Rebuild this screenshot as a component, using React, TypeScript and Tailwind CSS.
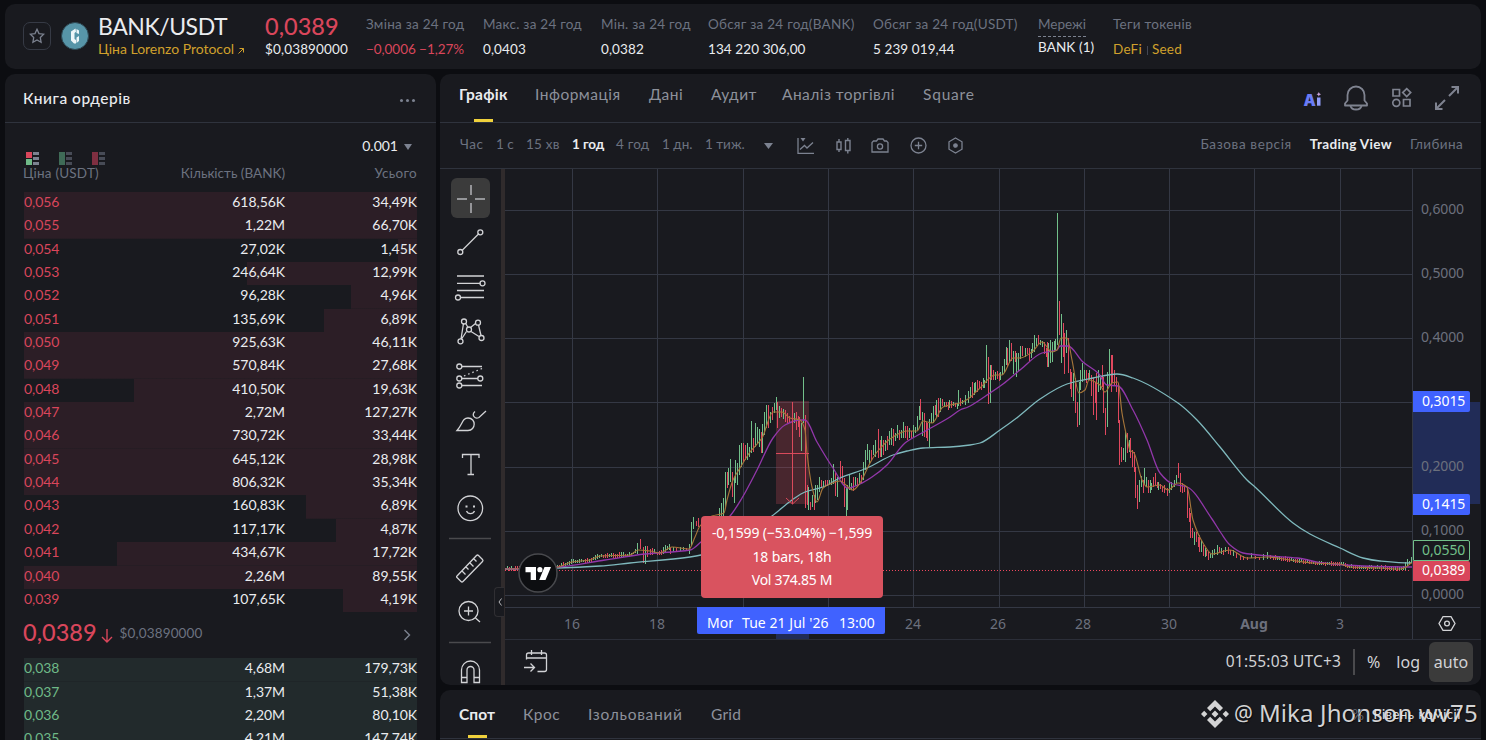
import React from 'react';

const UI = "font-['Lato','Noto_Sans',sans-serif]";
const CHART = "font-['Noto_Sans','Open_Sans',sans-serif]";

const asks: [string, string, string, number][] = [
  ['0,056', '618,56K', '34,49K', 393],
  ['0,055', '1,22M', '66,70K', 393],
  ['0,054', '27,02K', '1,45K', 19],
  ['0,053', '246,64K', '12,99K', 170],
  ['0,052', '96,28K', '4,96K', 66],
  ['0,051', '135,69K', '6,89K', 93],
  ['0,050', '925,63K', '46,11K', 393],
  ['0,049', '570,84K', '27,68K', 393],
  ['0,048', '410,50K', '19,63K', 283],
  ['0,047', '2,72M', '127,27K', 393],
  ['0,046', '730,72K', '33,44K', 393],
  ['0,045', '645,12K', '28,98K', 393],
  ['0,044', '806,32K', '35,34K', 393],
  ['0,043', '160,83K', '6,89K', 111],
  ['0,042', '117,17K', '4,87K', 81],
  ['0,041', '434,67K', '17,72K', 300],
  ['0,040', '2,26M', '89,55K', 393],
  ['0,039', '107,65K', '4,19K', 74],
];

const bids: [string, string, string, number][] = [
  ['0,038', '4,68M', '179,73K', 393],
  ['0,037', '1,37M', '51,38K', 393],
  ['0,036', '2,20M', '80,10K', 393],
  ['0,035', '4,21M', '147,74K', 393],
];

// Candles as "x high low direction" in chart pixels.
const candleData = `
637 543 554 g|640 539 549 r|643 547 554 r|643.5 547 563 r|645.5 546 564 g|647.5 546 557 r|650 549 555 r|652 548 555 r|654 549 553 g|657 552 555 r|659 551 555 r|661 550 555 r|663 547 554 g|665 545 552 g|667 546 550 g|669 544 550 g|670.5 548 554 r|673 547 552 g|676 548 551 r|680 547 551 g|683 547 550 g|686 548 550 r|689 544 554 g|
691.3 522 546 g|693.6 517 529 g|696 521 526 r|698.4 518 527 r|719.5 508 520 g|721.5 503 520 g|723.5 498 516 g|725.6 472 508 g|727.6 472 488 r|728.8 468 485 g|730.5 459 482 g|732.5 472 497 r|734.5 477 503 g|735.7 460 483 g|737.6 463 485 g|739.4 445 475 g|741.4 443 467 g|743.7 443 462 r|745.5 445 460 r|747.4 443 460 g|749.4 447 457 g|751.4 421 453 g|753.4 438 452 r|755.4 423 447 g|757.4 427 443 g|759.4 429 447 g|761.4 432 453 r|762.5 424 453 g|764.4 412 435 g|766.6 405 428 g|768.5 405 428 r|770.3 412 423 g|772 407 420 r|774 403 413 g|776 397 410 g|777.5 402 428 r|779 406 418 g|781 408 417 r|783 409 419 g|785 410 422 r|787 413 423 r|789.5 416 423 r|792.2 402 430 r|794 413 423 g|796 412 430 r|798 416 427 r|799.5 417 437 r|801.4 423 451 g|803.4 377 423 g|805.6 415 508 r|807.4 485 505 r|808.6 487 510 g|810.4 502 510 r|812.4 495 507 g|814.4 495 510 r|815.4 485 503 g|817.4 485 500 g|819.4 477 492 g|821.4 480 487 r|823.4 481 487 g|825.4 480 487 r|827.4 480 486 r|829.4 480 485 g|831.4 478 485 g|833.4 464 484 g|835.4 473 496 r|837.4 477 497 g|840.4 461 479 r|842.3 466 483 r|844.3 478 507 r|846.4 487 518 g|847.4 485 510 g|849.4 475 490 g|851.4 483 490 g|853.4 477 491 r|855.4 477 486 g|857.4 478 487 r|859.4 473 485 g|861.4 475 483 r|863.4 462 480 g|865.4 450 470 g|867.4 444 460 g|869.4 450 464 g|871.4 450 460 r|873.4 445 455 g|875.4 440 457 g|878.5 429 458 r|880.5 440 457 r|881.6 436 457 g|883.4 440 455 r|885.4 440 451 g|887.4 436 450 r|889.4 431 445 g|891.4 428 445 g|893.4 429 446 r|895.4 433 441 g|897.4 425 438 g|899.4 430 440 r|901.4 430 438 g|903.4 422 438 g|905.4 426 438 r|907.4 426 440 r|909.4 428 438 g|911.4 431 438 r|913.4 425 437 g|915.4 427 433 g|
917.4 416 430 g|919.4 406 420 g|920.5 399 420 r|922.4 412 436 g|924.4 413 437 r|926.4 422 438 r|927.5 423 441 r|929.4 419 447 g|931.4 413 423 g|933.4 406 423 g|935.4 405 415 r|936.5 400 417 g|938.5 398 417 r|940.5 398 412 g|942.5 399 406 r|944.4 402 407 g|946.4 402 407 r|948.5 402 410 r|949.6 400 408 g|951.5 401 408 r|953.5 402 406 g|955.5 403 407 r|957 404 409 g|958.6 390 406 g|960.5 398 406 r|962.5 400 404 g|965.5 395 405 g|968.4 391 403 g|970.5 387 398 g|972.5 382 398 r|974.5 383 395 g|975.5 382 392 g|977.5 380 392 r|979.5 381 388 r|981.5 382 390 r|983.5 378 388 g|984.5 380 388 g|986.5 345 383 g|988.5 357 404 r|990.5 365 403 g|991.6 365 380 r|993.5 370 380 r|995.5 372 380 g|997.5 371 379 r|999.5 373 381 r|1000.5 372 380 g|1002.5 366 375 g|1004.5 359 373 g|1006.5 347 365 g|1007.5 348 367 r|1009.5 340 363 g|1011.5 343 361 r|1013.5 351 374 g|1015.5 351 362 r|1016.5 353 377 g|1018.5 353 371 g|1020.5 346 359 g|1022.5 346 356 r|1025.5 348 357 g|1027.5 348 354 r|1029.5 348 361 r|1031.5 349 358 g|1032.5 343 353 g|1034.5 335 352 g|1036.5 338 346 g|1038.5 335 344 r|1040.5 340 345 g|1042.5 341 347 g|1044.5 342 354 r|1046 348 357 r|1047.5 342 367 r|1048.5 343 367 g|1050.5 340 363 g|1052.5 342 362 g|1054.5 341 352 g|1055.6 339 350 g|1057.5 213 345 g|1059.5 301 335 r|1061.5 314 363 g|1063.5 323 357 r|1064.5 333 374 r|1066.5 330 353 g|1068.5 338 373 r|1070.5 369 389 r|1071.6 372 397 r|1073.5 373 401 g|1075.5 378 413 r|1077.5 402 427 r|1079.5 382 425 g|1080.6 370 390 g|1082.5 363 382 g|1084.5 370 380 g|1086.5 370 383 r|1088 373 380 r|1089.5 370 380 g|1091.5 375 396 r|1093.5 378 415 r|1095.4 382 403 r|1096.5 373 420 r|1098.5 370 392 g|1100.4 375 390 g|1102.5 365 387 r|1103.6 377 413 r|1105.5 408 435 r|1107.5 372 427 g|1109.5 349 385 g|1111.5 355 392 r|1112.5 355 383 r|1114.5 370 385 r|1116.5 377 392 r|1118.4 383 423 r|1119.5 420 465 r|1121.5 447 462 r|1123.5 448 460 g|1125.5 432 462 g|1127.5 433 453 r|1129 440 452 g|1130.5 438 458 r|1132.5 450 467 r|1134.4 452 472 r|1135.5 467 498 r|1137.6 485 509 r|1139.5 480 502 g|1141.5 476 487 g|1143.5 480 493 r|1144.5 468 485 g|1146.5 477 487 g|1148.5 480 493 r|1150.5 480 493 g|1151.6 483 490 g|1153.5 477 487 r|1155.5 473 485 r|1157.5 482 488 r|1158.5 482 490 g|1160.5 484 489 r|1162.5 486 492 r|1164.5 485 493 r|1167.5 488 496 r|1169.5 483 493 g|1171.5 482 490 g|1174.5 480 487 g|1176.5 475 483 g|1178.5 463 478 r|1180.5 473 492 r|1182.5 483 493 r|1184.5 485 492 r|1187.5 488 518 r|1189.5 508 522 r|1190.6 513 538 r|1192.5 528 538 r|1194.5 532 545 g|1196.5 532 542 r|1198.5 537 547 r|1199.6 535 552 r|1201.5 540 552 g|1203.5 545 556 r|1205.5 548 557 g|1206.6 550 556 r|1208.5 552 560 r|1210.5 554 558 g|1212.5 550 558 g|1214.5 549 555 g|1217.5 545 555 g|1219.5 547 552 r|1221.5 548 554 g|1223.5 550 555 r|1225.5 547 552 g|1228.5 547 554 r|1230.5 550 555 r|1233.5 550 556 g|1236.5 553 558 r|1240.5 555 560 r|1243.5 556 560 r|1247.5 557 560 r|1251.5 553 558 g|1255.5 556 559 r|1259.5 557 560 r|1263.5 554 560 g|1267.5 552 559 g|1270.5 555 559 r|1273.5 556 560 r|
1403.5 566 570 g|1405.5 562 570 g|1407.5 559 566 g|1409.5 561 565 g|1411.5 557 563 g`;

const candles = candleData
  .replace(/\n/g, '')
  .split('|')
  .map((c) => {
    const [x, t, b, d] = c.split(' ');
    return { x: Math.floor(+x), t: +t, b: +b, up: d === 'g' };
  });

const ma7 =
  '505,569 557,567 572,562 590,560 600,556 630,555 638,550 650,551 660,553 672,547 689,549 695,537 700,526 712,516 724,513 727,500 733,480 740,468 750,452 762,438 773,412 782,412 790,418 800,420 805,430 807,453 812,487 817,502 823,488 830,484 840,481 853,490 860,483 870,463 877,452 893,437 907,431 917,431 923,421 932,423 943,407 950,405 960,403 968,399 980,388 995,375 1002,375 1013,358 1020,358 1032,352 1042,342 1052,352 1057,350 1061,338 1067,338 1072,360 1079,393 1085,390 1089,380 1100,385 1105,392 1112,383 1118,382 1122,413 1127,438 1130,450 1134,453 1142,480 1147,487 1160,485 1168,490 1178,483 1187,487 1193,520 1203,543 1212,554 1230,550 1247,558 1268,557 1290,560 1313,563 1340,564 1350,567 1380,568 1400,569 1406,567 1412,563';
const ma25 =
  '505,569 557,567 605,560 645,554 690,550 701,542 730,516 742,498 757,470 773,438 785,425 800,420 805,420 817,442 833,468 848,488 860,484 872,477 887,465 905,443 920,434 950,417 960,410 968,407 987,395 1003,384 1020,370 1042,353 1057,350 1060,346 1068,346 1083,362 1098,373 1107,385 1118,386 1133,410 1147,440 1160,473 1173,484 1187,487 1212,519 1221,533 1230,545 1243,553 1270,556 1297,558 1323,563 1363,566 1412,567';
const ma99 =
  '505,569 557,568 600,566 630,563 690,557 701,555 740,537 772,516 792,500 805,492 823,487 840,478 867,468 893,455 907,451 923,448 950,447 970,445 980,443 1000,430 1018,417 1040,399 1067,384 1093,378 1117,374 1133,378 1178,403 1197,420 1220,447 1247,480 1255,487 1293,523 1310,534 1340,548 1363,558 1380,561 1411,563';

const toPoints = (s: string) => s.split(' ').map((p) => p.split(',').map(Number));

// Monotone spline: tangents are taken from neighbouring points.
const smooth = (s: string) => {
  const p = toPoints(s);
  const slope = (i: number) => {
    if (i === 0 || i === p.length - 1) return 0;
    const a = (p[i][1] - p[i - 1][1]) / (p[i][0] - p[i - 1][0]);
    const b = (p[i + 1][1] - p[i][1]) / (p[i + 1][0] - p[i][0]);
    return a * b <= 0 ? 0 : (2 * a * b) / (a + b);
  };
  let d = `M${p[0][0]} ${p[0][1]}`;
  for (let i = 0; i < p.length - 1; i++) {
    const h = (p[i + 1][0] - p[i][0]) / 3;
    d += `C${p[i][0] + h} ${p[i][1] + slope(i) * h} ${p[i + 1][0] - h} ${p[i + 1][1] - slope(i + 1) * h} ${p[i + 1][0]} ${p[i + 1][1]}`;
  }
  return d;
};

// Quiet stretches where the price hugs its short average.
const quiet: { x: number; t: number; b: number; up: boolean }[] = [];
const ma7pts = toPoints(ma7);
const maAt = (x: number) => {
  const i = ma7pts.findIndex((p) => p[0] >= x);
  if (i <= 0) return ma7pts[0][1];
  const [x0, y0] = ma7pts[i - 1];
  const [x1, y1] = ma7pts[i];
  return y0 + ((y1 - y0) * (x - x0)) / (x1 - x0);
};
[
  [505, 636],
  [1275, 1402],
].forEach(([from, to]) => {
  for (let x = from; x < to; x += 2) {
    const n = Math.abs(Math.sin(x * 12.9898) * 43758.5453) % 1;
    const m = Math.abs(Math.sin(x * 78.233) * 12543.21) % 1;
    const y = maAt(x);
    quiet.push({ x, t: Math.round(y - 1 - n * 2), b: Math.round(y + 1 + m * 1.4), up: from < 600 ? m < 0.65 : m < 0.4 });
  }
});

const gridX = [572, 657, 743, 828, 913, 999, 1084, 1169, 1254, 1340];
const gridY = [210, 274, 338, 402, 467, 531, 595];
const dots = Array.from({ length: 302 }, (_, i) => 505 + i * 3);

function ChartSvg() {
  return (
    <svg className="block h-[439px] w-[907px]" viewBox="505 169 907 439" shapeRendering="crispEdges">
      {gridX.map((x) => (
        <rect key={x} x={x} y={169} width={1} height={438} fill="#343844" />
      ))}
      {gridY.map((y) => (
        <rect key={y} x={505} y={y} width={907} height={1} fill="#343844" />
      ))}
      <rect x={776} y={401} width={33} height={103} fill="#d94a5b" fillOpacity={0.25} />
      {[...quiet, ...candles].map((c, i) => (
        <rect key={i} x={c.x} y={c.t} width={1} height={Math.max(1, c.b - c.t)} fill={c.up ? '#72c08a' : '#e0485e'} />
      ))}
      <g fill="none" shapeRendering="auto" strokeWidth={1.3} strokeLinejoin="round">
        <path d={smooth(ma99)} stroke="#7fb9bd" />
        <path d={smooth(ma25)} stroke="#9237aa" />
        <path d={smooth(ma7)} stroke="#a6763a" strokeWidth={1.15} />
      </g>
      <rect x={776} y={453} width={33} height={1} fill="#d94a5b" />
      <rect x={792} y={402} width={1} height={102} fill="#d94a5b" />
      <path d="M786 498l6.500 6 6.500-6" stroke="#d94a5b" fill="none" shapeRendering="auto" />
      {dots.map((x) => (
        <rect key={x} x={x} y={570} width={1} height={1} fill="#f0485e" />
      ))}
      <rect x={505} y={607} width={907} height={1} fill="#343844" />
    </svg>
  );
}

function Stat({ label, value, width, red }: { label: string; value: string; width: string; red?: boolean }) {
  return (
    <div className={`${width} shrink-0 whitespace-nowrap`}>
      <div className="h-[25px] text-[13.5px] leading-[18px] tracking-[0.25px] text-[#6c7280]">{label}</div>
      <div className={`text-[13.5px] leading-[18px] ${red ? 'tracking-[-0.05px] text-[#d9465b]' : 'tracking-[0.1px] text-[#eaecef]'}`}>{value}</div>
    </div>
  );
}

function Header() {
  return (
    <header className="flex h-[65px] shrink-0 rounded-[10px] bg-[#191a1f] pl-[18px] pt-[11px]">
      <div className="mt-[7px] flex h-7 w-7 shrink-0 items-center justify-center rounded-[7px] border border-[#363a45]">
        <svg className="h-4 w-4" viewBox="0 0 16 16" fill="none" stroke="#7c8290" strokeWidth="1.3">
          <path d="M8 1.3l2 4.3 4.7.6-3.4 3.3.8 4.8L8 12l-4.1 2.3.8-4.8L1.3 6.2 6 5.6z" />
        </svg>
      </div>
      <svg className="ml-[10px] mt-[7px] h-7 w-7 shrink-0" viewBox="0 0 28 28">
        <circle cx="14" cy="14" r="13.5" fill="#5795a8" stroke="#2d4550" />
        <path d="M14.500 6.500l-4.500 3v9l3 3h2v-3.500l-1.500-1v-6l1.500-1.200zM15.500 7v4l2.500 1V8.500zM15.500 15.500v5.500l2.500-2v-5z" fill="#eef6f8" />
      </svg>
      <div className="ml-[9px] w-[167px] shrink-0 whitespace-nowrap">
        <div className="h-[25px] text-[23px] leading-[22px] tracking-[-0.45px] text-[#eaecef]">BANK/USDT</div>
        <div className="flex items-center text-[14px] leading-[18px] tracking-[-0.02px] text-[#d0a02c]">
          Ціна Lorenzo Protocol
          <svg className="ml-1 mt-[3px] h-[6px] w-[6px]" viewBox="0 0 6 6" fill="none" stroke="#d0a02c">
            <path d="M.5 5.5l5-5M1.5.5h4v4" />
          </svg>
        </div>
      </div>
      <div className="w-[101px] shrink-0 whitespace-nowrap">
        <div className="h-[25px] text-[23.5px] font-medium leading-[22px] text-[#d9465b]">0,0389</div>
        <div className="text-[13.5px] leading-[18px] tracking-[0.15px] text-[#eaecef]">$0,03890000</div>
      </div>
      <Stat label="Зміна за 24 год" value="−0,0006 −1,27%" width="w-[117px]" red />
      <Stat label="Макс. за 24 год" value="0,0403" width="w-[118px]" />
      <Stat label="Мін. за 24 год" value="0,0382" width="w-[107px]" />
      <Stat label="Обсяг за 24 год(BANK)" value="134 220 306,00" width="w-[165px]" />
      <Stat label="Обсяг за 24 год(USDT)" value="5 239 019,44" width="w-[165px]" />
      <div className="w-[75px] shrink-0 text-[13.5px] leading-[18px]">
        <div className="h-[22px] w-12 border-b border-dashed border-[#7c8290] text-[#6c7280]">Мережі</div>
        <div className="mt-[1px] tracking-[0.1px] text-[#eaecef]">BANK (1)</div>
      </div>
      <div className="text-[13.5px] leading-[18px] tracking-[0.25px]">
        <div className="h-[25px] text-[#6c7280]">Теги токенів</div>
        <div className="flex items-center text-[#d0a02c]">
          DeFi
          <span className="ml-[5px] mr-1 mt-[2px] h-[9px] w-px bg-[#434754]" />
          Seed
        </div>
      </div>
    </header>
  );
}

function BookRow({ row, side }: { row: [string, string, string, number]; side: 'ask' | 'bid' }) {
  return (
    <div
      className={`flex h-[23.35px] shrink-0 bg-no-repeat text-[14px] leading-[19.5px] tracking-[-0.05px] text-[#eaecef] ${
        side === 'ask'
          ? 'bg-[linear-gradient(#2c1e26,#2c1e26)]'
          : 'bg-[linear-gradient(#222a2c,#222a2c)]'
      }`}
      style={{ backgroundSize: `${row[3]}px 100%`, backgroundPosition: 'right' }}
    >
      <span className={`w-[100px] ${side === 'ask' ? 'text-[#d9465b]' : 'text-[#6fb987]'}`}>{row[0]}</span>
      <span className="w-[161px] text-right">{row[1]}</span>
      <span className="flex-1 text-right">{row[2]}</span>
    </div>
  );
}

function ModeIcon({ top, bottom, bars }: { top: string; bottom: string; bars: string }) {
  return (
    <svg className="h-[13px] w-[13px]" viewBox="0 0 13 13" shapeRendering="crispEdges">
      <rect width="6" height="6" fill={top} />
      <rect y={top === bottom ? 6 : 7} width="6" height={top === bottom ? 7 : 6} fill={bottom} />
      <path d="M7 1.5h6M7 6.5h6M7 11.5h6" stroke={bars} strokeWidth="3" />
    </svg>
  );
}

function OrderBook() {
  return (
    <section className="flex w-[431px] shrink-0 flex-col overflow-hidden rounded-t-[10px] bg-[#191a1f]">
      <div className="flex h-[49px] shrink-0 items-center justify-between border-b border-[#2f333d] pl-[18px] pr-[21px]">
        <h2 className="mt-[2px] text-[15.5px] font-medium tracking-[0.5px] text-[#eaecef]">Книга ордерів</h2>
        <div className="mt-1 flex gap-[3px]">
          <i className="h-[3px] w-[3px] rounded-full bg-[#7c8290]" />
          <i className="h-[3px] w-[3px] rounded-full bg-[#7c8290]" />
          <i className="h-[3px] w-[3px] rounded-full bg-[#7c8290]" />
        </div>
      </div>
      <div className="flex h-[42px] shrink-0 justify-between pl-[21px] pr-6 pt-[14px]">
        <div className="flex gap-5 pt-[15px]">
          <ModeIcon top="#d9465b" bottom="#6fb987" bars="#7c8290" />
          <ModeIcon top="#3f6b57" bottom="#3f6b57" bars="#474b56" />
          <ModeIcon top="#7f2f41" bottom="#7f2f41" bars="#474b56" />
        </div>
        <div className="flex h-[16px] items-center gap-[6px] text-[14px] text-[#eaecef]">
          0.001
          <svg className="mt-[3px] h-[6px] w-2" viewBox="0 0 8 6">
            <path d="M0 0h8L4 6z" fill="#7c8290" />
          </svg>
        </div>
      </div>
      <div className="-mt-px flex h-[28px] shrink-0 pl-[18px] pr-[19px] text-[13.5px] leading-[18px] text-[#6c7280]">
        <span className="w-[110px] tracking-[0.2px]">Ціна (USDT)</span>
        <span className="w-[152px] text-right">Кількість (BANK)</span>
        <span className="flex-1 text-right tracking-[0.3px]">Усього</span>
      </div>
      <div className="flex shrink-0 flex-col pl-[19px] pr-[19px]">
        {asks.map((r) => (
          <BookRow key={r[0]} row={r} side="ask" />
        ))}
      </div>
      <div className="flex h-[46px] shrink-0 items-center pb-[5px] pl-[18px] pr-[25px]">
        <span className="-mt-[2px] text-[23.5px] font-medium leading-6 text-[#d9465b]">0,0389</span>
        <svg className="ml-1 mt-[6px] h-[14px] w-3" viewBox="0 0 12 14" fill="none" stroke="#d9465b" strokeWidth="1.4">
          <path d="M6 0v13M1 8l5 5 5-5" />
        </svg>
        <span className="ml-[7px] text-[13.5px] tracking-[0.15px] text-[#6c7280]">$0,03890000</span>
        <svg className="ml-auto mt-[5px] h-3 w-2" viewBox="0 0 8 12" fill="none" stroke="#7c8290" strokeWidth="1.4">
          <path d="M1.5 1l5 5-5 5" />
        </svg>
      </div>
      <div className="flex shrink-0 flex-col pl-[19px] pr-[19px]">
        {bids.map((r) => (
          <BookRow key={r[0]} row={r} side="bid" />
        ))}
      </div>
    </section>
  );
}

function TopTabs() {
  return (
    <div className="flex h-[49px] shrink-0 border-b border-[#2f333d] pl-[19px] text-[15.5px] leading-[20px] tracking-[0.5px] text-[#8d919b]">
      <div className="flex w-[76px] flex-col pt-[10px] font-bold text-[#eaecef]">
        <span className="tracking-[0.3px]">Графік</span>
        <i className="ml-[15px] mt-[15px] h-[3px] w-[19px] bg-[#f0d13c]" />
      </div>
      <span className="w-[114px] pt-[10px]">Інформація</span>
      <span className="w-[62px] pt-[10px]">Дані</span>
      <span className="w-[71px] pt-[10px]">Аудит</span>
      <span className="w-[141px] pt-[10px] tracking-[0.45px]">Аналіз торгівлі</span>
      <span className="pt-[10px] tracking-[0.8px]">Square</span>
      <div className="ml-auto flex pr-[21px]">
        <svg className="mt-[17px] h-4 w-5" viewBox="0 0 20 16">
          <text x="1.500" y="14.7" fontSize="15.5" fontWeight="900" fontFamily="Inter" fill="#6a7cf5" letterSpacing="0">
            A
          </text>
          <rect x="15" y="6.500" width="3.500" height="8.200" fill="#8f9cf8" />
          <path d="M16.800 1l.7 1.6 1.6.7-1.6.7-.7 1.6-.7-1.6-1.6-.7 1.6-.7z" fill="#c9a3dc" />
        </svg>
        <svg className="ml-[21px] mt-[10px] h-[28px] w-[26px]" viewBox="0 0 26 28" fill="none" stroke="#7f8390" strokeWidth="1.8" strokeLinejoin="round">
          <path d="M2 21.500v-2l2.500-3V11a8.500 8.500 0 0 1 17 0v5.500l2.500 3v2z" />
          <path d="M7.500 22a5.600 4.300 0 0 0 11 0" />
        </svg>
        <svg className="ml-[22px] mt-[13px] h-[21px] w-[21px]" viewBox="0 0 21 21" fill="none" stroke="#7f8390" strokeWidth="1.7">
          <path d="M2 2.500h6.500V9H2zM12.500 12.500H19V19h-6.500zM15.700 1.600l4 4-4 4-4-4z" />
          <circle cx="5.300" cy="15.800" r="3.500" />
        </svg>
        <svg className="ml-[22px] mt-[11px] h-[26px] w-[26px]" viewBox="0 0 26 26" fill="none" stroke="#7f8390" strokeWidth="2">
          <path d="M15 11l9-9M17.500 2H24v6.500M11 15l-9 9M2 17.500V24h6.500" />
        </svg>
      </div>
    </div>
  );
}

function SubBar() {
  return (
    <div className="flex h-[46px] shrink-0 border-b border-[#2f333d] pl-5 text-[13.5px] leading-[18px] text-[#6c7280]">
      <div className="flex whitespace-nowrap pt-3">
        <span className="w-9 tracking-[0.5px]">Час</span>
        <span className="w-[30px]">1 с</span>
        <span className="w-[46px] tracking-[0.2px]">15 хв</span>
        <span className="w-[44px] font-bold tracking-[-0.1px] text-[#eaecef]">1 год</span>
        <span className="w-[46px] tracking-[0.2px]">4 год</span>
        <span className="w-[43px]">1 дн.</span>
        <span className="w-[59px]">1 тиж.</span>
      </div>
      <svg className="mt-[20px] h-[6px] w-[9px]" viewBox="0 0 9 6">
        <path d="M0 0h9L4.500 6z" fill="#7c8290" />
      </svg>
      <div className="flex gap-5 pl-6 pt-[14px]">
        <svg className="h-[17px] w-[17px]" viewBox="0 0 17 17" fill="none" stroke="#7c8290" strokeWidth="1.3">
          <path d="M1 1v15.300h16M3 12.500l4.500-4 2.500 2.500L16 5.500" />
          <path d="M3.500 1h5L6 4.500z" fill="#7c8290" stroke="none" />
        </svg>
        <svg className="ml-[1px] h-[17px] w-[17px]" viewBox="0 0 17 17" fill="none" stroke="#7c8290" strokeWidth="1.400">
          <path d="M2 5h4v7.500H2zM4 2v3M4 12.500V15M10.500 3.500H15v10h-4.500zM12.800 1v2.500M12.800 13.500V16.500" />
        </svg>
        <svg className="-ml-px h-[17px] w-[18px]" viewBox="0 0 18 17" fill="none" stroke="#7c8290" strokeWidth="1.3">
          <path d="M1 15V5.500l1.500-1.500h3L7 2h5l1.500 2h2L17 5.500V15z" />
          <circle cx="9" cy="9.500" r="2.600" />
        </svg>
        <svg className="ml-px h-[17px] w-[17px]" viewBox="0 0 17 17" fill="none" stroke="#7c8290" strokeWidth="1.3">
          <circle cx="8.500" cy="8.500" r="7.500" />
          <path d="M8.500 4.800v7.400M4.800 8.500h7.400" />
        </svg>
        <svg className="h-[17px] w-[17px]" viewBox="0 0 17 17" fill="none" stroke="#7c8290" strokeWidth="1.3">
          <path d="M8.500 1l6.500 3.800v7.400L8.500 16 2 12.200V4.800z" />
          <circle cx="8.500" cy="8.500" r="1.700" fill="#7c8290" />
        </svg>
      </div>
      <div className="ml-auto flex gap-[18px] pr-[18px] pt-3">
        <span className="tracking-[0.62px]">Базова версія</span>
        <span className="font-bold tracking-[0.35px] text-[#eaecef]">Trading View</span>
        <span className="tracking-[0.4px]">Глибина</span>
      </div>
    </div>
  );
}

function Toolbar() {
  return (
    <div className="relative w-[62px] shrink-0">
      <svg className="block h-[516px] w-[61px]" viewBox="440 169 61 516" fill="none" stroke="#d2d3d6" strokeWidth="1.300">
        <rect x="451" y="178" width="39" height="40" rx="6" fill="#3b3b3b" stroke="none" />
        <path d="M471 185v10M471 203v10M457 199h10M475 199h10" stroke="#b4b5b9" strokeWidth="1.500" />
        <path d="M462 250.500l17-17" />
        <circle cx="460.300" cy="252" r="2.500" /><circle cx="480.300" cy="232.300" r="2.500" />
        <path d="M457 276h27M457 283.300h23.500M457 290.500h27M461 297.500h23" />
        <circle cx="482.500" cy="283.300" r="2.500" /><circle cx="458" cy="297.500" r="2.500" />
        <path d="M463.500 323.500l-2.500 15.500M465.500 323l2.500 4.500M470.500 327.500l5-4M471 331.500l8 5M466.500 331.500l-5 7.500M478.500 325l2.500 10.500" />
        <circle cx="464" cy="321.500" r="2.500" /><circle cx="478" cy="322.700" r="2.500" /><circle cx="469" cy="329.500" r="2.500" /><circle cx="460.500" cy="341.300" r="2.500" /><circle cx="481.500" cy="338" r="2.500" />
        <path d="M462 366.500h20M462 378.500h16M462 385.500h20" />
        <path d="M464 376l18-7.500" strokeDasharray="1.500 3" />
        <circle cx="459.300" cy="366.500" r="2.500" /><circle cx="459.300" cy="378.500" r="2.500" /><circle cx="459.300" cy="385.500" r="2.500" /><circle cx="480.300" cy="378.500" r="2.500" />
        <path d="M457 430.500h11c8 0 8.500-12.500 0-12.500-6 0-5 6-11 12.500zM475 411.500c-4 3.500 0 8 4 6l7-6.500" />
        <path d="M462.500 458v-3.500h16.500v3.500M471 454.500v20M467.500 474.500h6.500" />
        <circle cx="470.300" cy="508.300" r="12.300" />
        <path d="M466.500 511c1.500 3.500 6.500 3.500 8 0" />
        <path d="M465.500 506.500h2M473 506.500h2" strokeWidth="2" />
        <path d="M449 538.500h42M449 642.500h42" stroke="#4a4a4d" />
        <path d="M457 576l19.500-20.500q1-1 2 0l4 4q1 1 0 2L463 581.500q-1 1-2 0l-4-4q-.8-.8 0-1.500zM462 571l3.500 3.500M466 567l2.500 2.500M470 563l3.500 3.500M474 559l2.500 2.500" />
        <circle cx="468.500" cy="611" r="9.500" />
        <path d="M475.500 618l4.500 4M468.500 606.500v9M464 611h9" />
        <path d="M461.500 682.500v-12.500a9 9 0 0 1 18 0v12.500h-5.500v-12.500a3.500 3.500 0 0 0-7 0v12.500zM461.500 677.500h5.500M474 677.500h5.500" />
      </svg>
    </div>
  );
}

const priceLabels = ['0,6000', '0,5000', '0,4000', '', '0,2000', '0,1000', '0,0000'];

function PriceAxis() {
  return (
    <div className="relative h-[439px] w-[68px] shrink-0 border-b border-l border-[#343844] text-[14px] text-[#6c707d]">
      <div className="absolute left-0 top-[233px] h-[102px] w-[67px] bg-[#212c57]" />
      <div className="relative flex flex-col pt-[30px]">
        {priceLabels.map((p, i) => (
          <span key={i} className="h-[64.2px] pl-[8px] leading-[20px] tracking-[-0.15px]">
            {p}
          </span>
        ))}
      </div>
      <div className="absolute left-0 top-[222px] h-[21px] w-[57px] rounded-r-[2px] bg-[#4062ff] pl-[9px] leading-[19px] tracking-[-0.1px] text-white">0,3015</div>
      <div className="absolute left-0 top-[325px] h-[21px] w-[57px] rounded-r-[2px] bg-[#4062ff] pl-[9px] leading-[19px] tracking-[-0.1px] text-white">0,1415</div>
      <div className="absolute left-0 top-[371px] h-[21px] w-[57px] rounded-r-[2px] border border-[#72c08a] bg-[#191a1f] pl-[8px] leading-[17px] tracking-[-0.1px] text-[#72c08a]">0,0550</div>
      <div className="absolute left-0 top-[392px] h-[20px] w-[57px] rounded-r-[2px] bg-[#d9465b] pl-[9px] leading-[17px] tracking-[-0.1px] text-white">0,0389</div>
    </div>
  );
}

const timeLabels: [string, number][] = [
  ['16', 572], ['18', 657], ['24', 913], ['26', 998], ['28', 1083], ['30', 1169], ['Aug', 1254], ['3', 1340],
];

function TimeAxis() {
  return (
    <div className="flex h-[32px] shrink-0 border-b border-[#2b2e38]">
      <div className="relative w-[907px] text-[14px] leading-[31px] text-[#6c707d]">
        {timeLabels.map(([t, x]) => (
          <span
            key={t}
            className={`absolute top-0 w-10 -translate-x-1/2 text-center ${t === 'Aug' ? 'font-bold' : ''}`}
            style={{ left: x - 505 }}
          >
            {t}
          </span>
        ))}
        <div className="absolute left-[271px] top-6 h-[7px] w-[33px] bg-[#212c57]" />
        <div className="absolute -top-px left-[192px] flex h-[27px] w-[188px] whitespace-nowrap rounded-b-[2px] bg-[#4062ff] pl-[10px] leading-[32px] text-white">
          <span className="w-[26px] overflow-hidden">Mon</span>
          <span className="ml-[9px] w-[97px] tracking-[0.05px]">Tue 21 Jul '26</span>
          <span>13:00</span>
        </div>
      </div>
      <div className="flex w-[68px] items-center justify-center border-l border-[#343844]">
        <svg className="h-[15px] w-[18px]" viewBox="0 0 18 15" fill="none" stroke="#d2d3d6" strokeWidth="1.300">
          <path d="M5 .7h8l4 6.800-4 6.800H5L1 7.500z" />
          <circle cx="9" cy="7.500" r="2.400" />
        </svg>
      </div>
    </div>
  );
}

function BottomBar() {
  return (
    <div className="flex h-[45px] items-center pb-[2px] pl-[19px] pr-2 text-[16px] text-[#d2d3d6]">
      <svg className="h-[23px] w-[24px]" viewBox="0 0 24 23" fill="none" stroke="#d2d3d6" strokeWidth="1.300">
        <path d="M2.500 9.500V5q0-2 2-2h16q2 0 2 2v14.500q0 2-2 2h-7M2.500 8h20M7.500 0v5M17.500 0v5M0 17.500h10M6.500 13.500l4 4-4 4" />
      </svg>
      <span className="ml-auto text-[15.5px] tracking-[0.18px]">01:55:03 UTC+3</span>
      <i className="ml-3 h-[26px] w-[2px] bg-[#4a4a4d]" />
      <span className="ml-[12px]">%</span>
      <span className="ml-[16px]">log</span>
      <span className="ml-[9px] flex h-10 w-[44px] items-center justify-center rounded-md bg-[#3b3b3b]">auto</span>
    </div>
  );
}

function ChartArea() {
  return (
    <div className={`relative flex h-[516px] shrink-0 overflow-hidden ${CHART}`}>
      <Toolbar />
      <div className="-ml-[1px] w-1 shrink-0 bg-[#302b2c]" />
      <div className="flex w-[976px] shrink-0 flex-col">
        <div className="flex h-[439px] shrink-0">
          <ChartSvg />
          <PriceAxis />
        </div>
        <TimeAxis />
        <BottomBar />
      </div>
      <div className="absolute left-[54px] top-[418px] flex h-[30px] w-[10px] items-center justify-center rounded-l-[4px] border border-r-0 border-[#302f33] bg-[#191a1f]">
        <svg className="h-2 w-1" viewBox="0 0 4 8" fill="none" stroke="#b4b5b9">
          <path d="M3.500 .5L1 4l2.500 3.500" />
        </svg>
      </div>
      <svg className="absolute left-[78px] top-[384px] h-10 w-10" viewBox="0 0 40 40">
        <circle cx="20" cy="20" r="19" fill="#0d0e11" stroke="#48494d" strokeWidth="1.500" />
        <path d="M7.500 14h10.500v13h-5.300V19.300H7.500zM26.500 14h6.500l-5.500 13h-6.300zM19.300 16.700a2.600 2.600 0 1 0 5.200 0 2.600 2.600 0 1 0-5.200 0z" fill="#fff" />
      </svg>
      <div className="absolute left-[261px] top-[347px] flex h-[82px] w-[182px] flex-col items-center whitespace-nowrap rounded-[4px] bg-[#d9535f] pt-[5px] text-[14px] leading-[23.5px] tracking-[-0.13px] text-white">
        <span>-0,1599 (−53.04%) −1,599</span>
        <span>18 bars, 18h</span>
        <span className="tracking-[-0.3px]">Vol 374.85 M</span>
      </div>
    </div>
  );
}

function TradePanel() {
  return (
    <section className="relative mt-[5px] flex h-[60px] shrink-0 rounded-t-[10px] bg-[#191a1f] pl-[19px] pt-[14px] text-[15.5px] leading-[20px] tracking-[0.5px] text-[#8d919b]">
      <div className="absolute left-0 top-[48px] h-px w-full bg-[#2f333d]" />
      <div className="flex w-16 flex-col font-bold text-[#eaecef]">
        <span className="tracking-[0.1px]">Спот</span>
        <i className="ml-[9px] mt-[11px] h-[3px] w-[19px] bg-[#f0d13c]" />
      </div>
      <span className="w-[65px]">Крос</span>
      <span className="w-[123px] tracking-[0.7px]">Ізольований</span>
      <span className="tracking-[0.2px]">Grid</span>
      <div className={`absolute left-[761px] top-[8px] flex items-center whitespace-nowrap text-[24px] leading-[30px] text-[#d3d3d4] [text-shadow:1px_1px_1px_rgba(0,0,0,0.6)] ${CHART}`}>
        <svg className="mt-[2px] h-7 w-7" viewBox="0 0 28 28" fill="#d3d3d4">
          <path d="M14 0l8 8-3.200 3.200L14 6.400l-4.800 4.800L6 8zM14 28l8-8-3.200-3.200L14 21.600l-4.800-4.800L6 20zM14 10.500l3.500 3.500-3.500 3.500-3.500-3.500zM3.200 10.800L6.400 14l-3.200 3.200L0 14zM24.800 10.800L28 14l-3.200 3.200L21.600 14z" />
        </svg>
        <span className="ml-[5px] text-[21px] tracking-normal">@</span>
        <span className="ml-[6px] tracking-[0.12px]">Mika Jhonson wv75</span>
      </div>
      <div className="absolute left-[912px] top-[15px] flex items-center gap-[9px] whitespace-nowrap text-[13px] leading-[18px] tracking-[0.55px] text-[#e1e3e6]">
        <span className="text-[15px] text-[#5f6470]">%</span>
        <span>Рівень комісії</span>
      </div>
    </section>
  );
}

export default function App() {
  return (
    <div className={`flex h-[740px] w-[1486px] flex-col overflow-hidden bg-[#0c0d11] pl-[5px] pr-[5px] pt-1 ${UI}`}>
      <Header />
      <div className="mt-[5px] flex min-h-0 flex-1 gap-1">
        <OrderBook />
        <div className="flex w-[1041px] shrink-0 flex-col">
          <section className="flex h-[611px] shrink-0 flex-col overflow-hidden rounded-[10px] bg-[#191a1f]">
            <TopTabs />
            <SubBar />
            <ChartArea />
          </section>
          <TradePanel />
        </div>
      </div>
    </div>
  );
}
